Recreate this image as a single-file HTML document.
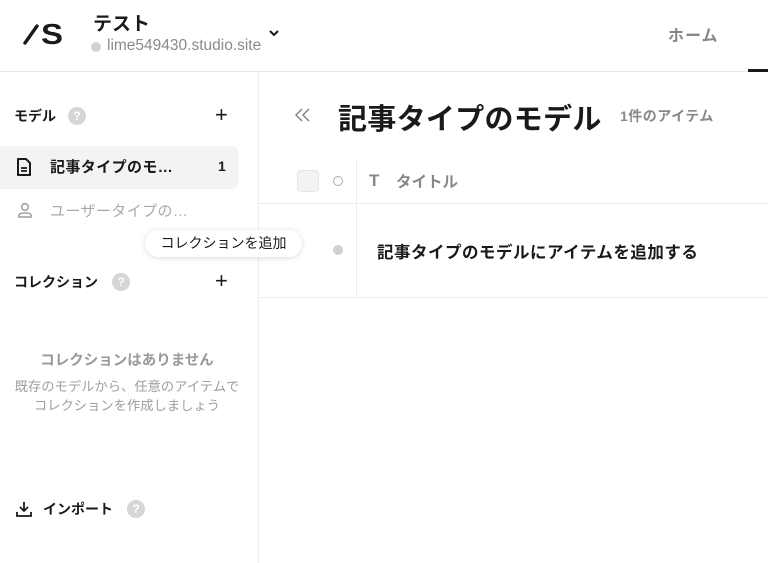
<!DOCTYPE html>
<html><head><meta charset="utf-8"><style>
*{margin:0;padding:0;box-sizing:border-box}
body{width:768px;height:563px;background:#fff;position:relative;overflow:hidden;font-family:"Liberation Sans","Noto Sans CJK JP",sans-serif;color:#1a1a1a}
.a{position:absolute;white-space:nowrap}
.q{position:absolute;width:18px;height:18px;border-radius:50%;background:#d6d6d6;color:#fff;font-size:12px;font-weight:bold;text-align:center;line-height:18px}
</style></head><body>
<div class="a" style="left:0;top:71px;width:768px;height:1px;background:#e8e8e8"></div>
<svg class="a" style="left:22px;top:20px" width="44" height="28" viewBox="0 0 44 28"><line x1="3" y1="23" x2="15" y2="6" stroke="#1a1a1a" stroke-width="3.4" stroke-linecap="round"/><text x="19" y="24" font-family="Liberation Sans" font-size="29" font-weight="bold" fill="#1a1a1a" textLength="22" lengthAdjust="spacingAndGlyphs">S</text></svg>
<div class="a" style="left:93px;top:9px;font-size:19px;font-weight:bold">テスト</div>
<div class="a" style="left:91px;top:42px;width:10px;height:10px;border-radius:50%;background:#d2d2d2"></div>
<div class="a" style="left:107px;top:37px;font-size:15.5px;color:#8a8a8a">lime549430.studio.site</div>
<svg class="a" style="left:268px;top:28px" width="12" height="10"><path d="M2 3l4 4 4-4" fill="none" stroke="#1a1a1a" stroke-width="2"/></svg>
<div class="a" style="left:668px;top:22px;font-size:16px;font-weight:bold;color:#888;letter-spacing:1px">ホーム</div>
<div class="a" style="left:748px;top:69px;width:20px;height:3px;background:#1a1a1a"></div>
<div class="a" style="left:258px;top:72px;width:1px;height:491px;background:#ececec"></div>
<div class="a" style="left:14px;top:106px;font-size:14px;font-weight:bold">モデル</div>
<div class="q" style="left:68px;top:107px">?</div>
<div class="a" style="left:215px;top:102px;font-size:22px;font-weight:300">+</div>
<div class="a" style="left:0;top:146px;width:239px;height:43px;background:#f3f3f3;border-radius:0 8px 8px 0"></div>
<svg class="a" style="left:15px;top:157px" width="18" height="20" viewBox="0 0 18 20"><path d="M3 2h8l4 4v12H3z" fill="none" stroke="#1a1a1a" stroke-width="2" stroke-linejoin="round"/><path d="M6 11h6M6 14h6" stroke="#1a1a1a" stroke-width="1.8"/></svg>
<div class="a" style="left:50px;top:156px;font-size:15px;font-weight:bold;letter-spacing:0.4px">記事タイプのモ…</div>
<div class="a" style="left:218px;top:158px;font-size:14px;font-weight:bold">1</div>
<svg class="a" style="left:16px;top:201px" width="18" height="18" viewBox="0 0 18 18"><circle cx="9" cy="6" r="3.3" fill="none" stroke="#aaa" stroke-width="1.8"/><path d="M3 16v-1.5c0-1.5 2-2.5 6-2.5s6 1 6 2.5V16z" fill="none" stroke="#aaa" stroke-width="1.8"/></svg>
<div class="a" style="left:50px;top:200px;font-size:15px;color:#aaa;letter-spacing:0.4px">ユーザータイプの…</div>
<div class="a" style="left:145px;top:230px;width:157px;height:27px;border-radius:14px;background:#fff;box-shadow:0 1px 6px rgba(0,0,0,.15);font-size:14px;text-align:center;line-height:27px">コレクションを追加</div>
<div class="a" style="left:14px;top:272px;font-size:14px;font-weight:bold">コレクション</div>
<div class="q" style="left:112px;top:273px">?</div>
<div class="a" style="left:215px;top:268px;font-size:22px;font-weight:300">+</div>
<div class="a" style="left:0;top:349px;width:254px;text-align:center;font-size:14.5px;font-weight:bold;color:#999">コレクションはありません</div>
<div class="a" style="left:0;top:377px;width:254px;text-align:center;font-size:13.3px;line-height:19px;color:#a0a0a0;white-space:normal">既存のモデルから、任意のアイテムで<br>コレクションを作成しましょう</div>
<svg class="a" style="left:15px;top:500px" width="18" height="18" viewBox="0 0 18 18"><path d="M9 2v9M5 7l4 4 4-4M2 12v4h14v-4" fill="none" stroke="#1a1a1a" stroke-width="1.8"/></svg>
<div class="a" style="left:43px;top:499px;font-size:14px;font-weight:bold">インポート</div>
<div class="q" style="left:127px;top:500px">?</div>
<svg class="a" style="left:293px;top:107px" width="20" height="16"><path d="M9 2L3 8l6 6M16 2l-6 6 6 6" fill="none" stroke="#888" stroke-width="1.5"/></svg>
<div class="a" style="left:338px;top:96px;font-size:29px;font-weight:bold;letter-spacing:0.3px">記事タイプのモデル</div>
<div class="a" style="left:620px;top:106px;font-size:14px;font-weight:bold;color:#888;letter-spacing:0.5px">1件のアイテム</div>
<div class="a" style="left:297px;top:170px;width:22px;height:22px;border-radius:4px;background:#f3f3f3;border:1px solid #e6e6e6"></div>
<div class="a" style="left:333px;top:176px;width:10px;height:10px;border-radius:50%;border:1px solid #aaa"></div>
<div class="a" style="left:356px;top:160px;width:1px;height:137px;background:#ececec"></div>
<div class="a" style="left:258px;top:203px;width:510px;height:1px;background:#ececec"></div>
<div class="a" style="left:258px;top:297px;width:510px;height:1px;background:#ececec"></div>
<div class="a" style="left:369px;top:171px;font-size:17px;font-weight:bold;color:#888;font-family:'Liberation Sans',sans-serif">T</div>
<div class="a" style="left:396px;top:170px;font-size:15.5px;font-weight:bold;color:#888">タイトル</div>
<div class="a" style="left:333px;top:245px;width:10px;height:10px;border-radius:50%;background:#d0d0d0"></div>
<div class="a" style="left:377px;top:239px;font-size:16.5px;font-weight:bold;letter-spacing:0.5px">記事タイプのモデルにアイテムを追加する</div>
</body></html>
